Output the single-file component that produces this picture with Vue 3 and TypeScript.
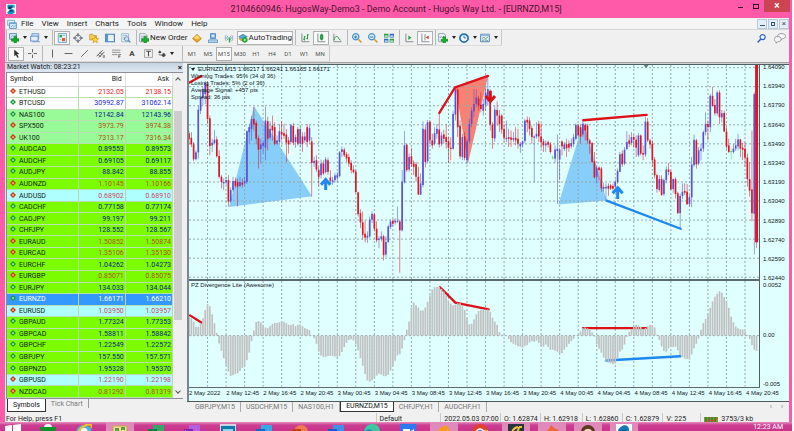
<script setup lang="ts">
import { h, ref } from 'vue'
import type { FunctionalComponent } from 'vue'

/* ---------- icons: [path, fill, stroke, stroke width] on a 16 x 16 grid ---------- */
type Shape = [string, string, string?, number?]

const icons: Record<string, Shape[]> = {
  app: [
    ['M0 0h16v16H0z', '#f4fbff'],
    ['M3 1h10l1 3-6 4 5 1 1 5-4 2H3l-1-3 5-4-4-1-1-4z', '#1c8fc4'],
    ['M4 4h7L7 8H4zM6 10h5v2H5z', '#0b3350'],
    ['M12 1l2 2v3h-3z', '#30b6e8'],
  ],
  charts: [
    ['M1 2h11v8H1z', '#e8f3fc', '#6fa3d4', 1.4],
    ['M4 6h11v9H4z', '#d8eafa', '#4f8cc8', 1.4],
    ['M4 6h11v2H4z', '#6fa8dc'],
    ['M6 13l3-3 2 2 3-2', 'none', '#4f8cc8', 1],
  ],
  newChart: [
    ['M1 1h11v9H1z', '#d8eaf8', '#4c86b8', 1.4],
    ['M3 7l3-3 2 2 3-3', 'none', '#4c86b8', 1],
    ['M8 5h4v4h4v4h-4v3H8v-3H4V9h4z', '#14a82a', '#0b7d1c', 0.8],
  ],
  profiles: [
    ['M3 1h11v8H3z', '#cfe2f4', '#5a90c4', 1.2],
    ['M1 5h12v8H1z', '#e4effa', '#4f86bd', 1.4],
    ['M4 14h12', 'none', '#77a4cf', 1.6],
  ],
  watch: [
    ['M2 1h13v14H2z', '#eef6fd', '#5f94c4', 1.4],
    ['M4 3h4v4H4z', '#27a83b'],
    ['M8 8h5v5H8z', '#e05a26'],
    ['M9 4h4M4 10h3', 'none', '#7fa9cf', 1.2],
  ],
  cross: [
    ['M8 3a5 5 0 1 0 .01 0z', 'none', '#55606c', 1.6],
    ['M8 0v6M8 10v6M0 8h6M10 8h6', 'none', '#55606c', 1.6],
  ],
  navigator: [
    ['M1 2h5l1 2h5v7H1z', '#f3cf5c', '#b88b1c', 1],
    ['M10 5l1.500 3.500 4 .5-3 2.500.8 4-3.300-2-3.300 2 .8-4-3-2.500 4-.5z', '#ffd836', '#c58d10', 1],
  ],
  terminal: [
    ['M1 2h14v12H1z', '#f4f9fd', '#3f79b8', 1.8],
    ['M1 2h4v12H1z', '#5a96d2'],
    ['M7 5h6M7 8h6', 'none', '#c6d8ea', 1],
  ],
  tester: [
    ['M1 1h11v13H1z', '#e8f1f9', '#8aacc9', 1.2],
    ['M3 4h7M3 7h3M3 10h3', 'none', '#8aacc9', 1.2],
    ['M9 6a3.500 3.500 0 1 0 .01 0z', '#cfe5f7', '#5484ae', 1.4],
    ['M12 12l3 3', 'none', '#5484ae', 2],
  ],
  order: [
    ['M1 1h9l3 3v10H1z', '#f7fafc', '#7c8fa0', 1.2],
    ['M3 5h6M3 8h5', 'none', '#7c8fa0', 1.2],
    ['M8 5h4v4h4v4h-4v3H8v-3H4V9h4z', '#18b12c', '#0b7d1c', 0.8],
  ],
  gold: [
    ['M1 9l7-7 7 7-7 6z', '#e8aa24', '#a36b0c', 1],
    ['M3 8l5-5 5 5-5 2z', '#ffd867'],
  ],
  mql: [
    ['M4 1h8v8H4z', '#7db4e4', '#3c79b8', 1.2],
    ['M1 11h14l1 4H0z', '#bcd8f0', '#4a86c0', 1.2],
    ['M6 3h4v3H6z', '#e6f2fc'],
  ],
  signal: [
    ['M4 3a7 7 0 0 0 0 10M12 3a7 7 0 0 1 0 10', 'none', '#8aa6b8', 1.4],
    ['M6 5a4 4 0 0 0 0 6M10 5a4 4 0 0 1 0 6', 'none', '#5c9ac8', 1.4],
    ['M7 7h3v8H8z', '#35a84a'],
  ],
  auto: [
    ['M1 6l7-4 7 4-7 4z', '#58a8dc', '#2b74a8', 1],
    ['M2 8c0 5 9 7 10 0l-5 3z', '#e8b839', '#a5781a', 1],
    ['M11 7a4 4 0 1 0 .01 0z', '#21b038', '#0d7f20', 0.8],
    ['M10 9l3 2-3 2z', '#fff'],
  ],
  bars: [
    ['M3 1v13h12', 'none', '#6c7680', 1.3],
    ['M7 5v7M7 10h-2M7 6h2M12 2v8M12 3h2M12 9h-2', 'none', '#16943a', 1.5],
  ],
  candles: [
    ['M3 1v13h12', 'none', '#6c7680', 1.3],
    ['M9 1v11', 'none', '#16943a', 1.3],
    ['M7 3h4v7H7z', '#22b04c', '#0f7d30', 1],
  ],
  line: [
    ['M3 1v13h12', 'none', '#6c7680', 1.3],
    ['M3 11c2-7 6-7 8-2l3 3', 'none', '#16943a', 1.5],
  ],
  zoomIn: [
    ['M6 1a5 5 0 1 0 .01 0z', '#d4ecfb', '#3c8ccc', 1.8],
    ['M10 10l5 5', 'none', '#d29a2c', 2.6],
    ['M6 4v5M3.500 6.500h5', 'none', '#2478b8', 1.6],
  ],
  zoomOut: [
    ['M6 1a5 5 0 1 0 .01 0z', '#d4ecfb', '#3c8ccc', 1.8],
    ['M10 10l5 5', 'none', '#d29a2c', 2.6],
    ['M3.500 6.500h5', 'none', '#2478b8', 1.6],
  ],
  tile: [
    ['M0 1h7v6H0zM9 9h7v6H9z', '#2f9e3c'],
    ['M9 1h7v6H9zM0 9h7v6H0z', '#2d6fbe'],
    ['M1 4h5v2H1zM10 4h5v2h-5zM1 12h5v2H1zM10 12h5v2h-5z', '#dff0fb'],
  ],
  scroll: [
    ['M3 1v13h12', 'none', '#6c7680', 1.3],
    ['M7 4l5 3.500L7 11z', '#22a33d'],
  ],
  shift: [
    ['M3 1v13h12M8 2v10', 'none', '#6c7680', 1.3],
    ['M14 4L9 7l5 3z', '#c44a3c'],
  ],
  indicators: [
    ['M1 1h9l2 3v10H1z', '#eef4f8', '#7e8f9e', 1.2],
    ['M3 8c2-6 4 3 6-3', 'none', '#4d7ea8', 1.2],
    ['M8 6h4v4h4v3h-4v3H8v-3H5v-3h3z', '#18b12c', '#0b7d1c', 0.8],
  ],
  clock: [
    ['M8 1.500a6.500 6.500 0 1 0 .01 0z', '#f0f8ff', '#1f6cb8', 2.6],
    ['M8 4v4h3', 'none', '#1f6cb8', 1.4],
  ],
  template: [
    ['M1 2h14v12H1z', '#e6f1fa', '#5589b8', 1.6],
    ['M1 2h14v3H1z', '#8cb6da'],
    ['M3 9l3-2 3 2 4-3M3 12l4-1 6 1', 'none', '#4c8a5c', 1.2],
  ],
  search: [
    ['M10 1a4.500 4.500 0 1 0 .01 0z', '#eef4ff', '#2d5bc8', 2],
    ['M6.500 9.500L1 15', 'none', '#2d5bc8', 2.6],
  ],
  chat: [
    ['M10 2c-7 0-6 7-2 7l1 2 2-2c6 0 6-7-1-7z', '#f5f5f5', '#8d9299', 1.2],
    ['M5 6c-6 0-6 6-2 7v2l2-2c6 0 6-7 0-7z', '#f5f5f5', '#8d9299', 1.2],
  ],
  pointer: [['M4 1l9 8-4 .5 3 5-2.500 1L7 10.500 4 13z', '#333']],
  plus: [['M8 0v6M8 10v6M0 8h6M10 8h6', 'none', '#555', 1.6]],
  vline: [['M8 1v14', 'none', '#555', 1.6]],
  hline: [['M1 8h14', 'none', '#555', 1.6]],
  trend: [['M2 14L14 2', 'none', '#555', 1.5]],
  channel: [
    ['M1 13L12 2M5 15L15 5M4 10l4 4M7 6l4 4', 'none', '#444', 1.5],
    ['M12 12h4M12 14h4M12 16h4', 'none', '#444', 1.1],
  ],
  fibo: [
    ['M0 2h15M0 6h15M0 10h10', 'none', '#777', 1.3],
    ['M12 10v6M12 10h4M12 13h3', 'none', '#444', 1.2],
  ],
  label: [['M1 1h14v14H1z', 'none', '#888', 1.2], ['M4 4h8M8 4v9', 'none', '#444', 1.8]],
  arrows: [
    ['M2 6l3-4 3 4-3 2z', '#444'],
    ['M8 11l4-4 3 4-3 3zM3 10l5 1', '#444', '#444', 1.2],
  ],
  up: [['M8 0l8 8-8 8-8-8z', '#1c9a3e'], ['M8 5l3 3-3 3-3-3z', '#c8f7d0']],
  down: [['M8 0l8 8-8 8-8-8z', '#cc3c14'], ['M8 5l3 3-3 3-3-3z', '#ffc9b0']],
  /* task bar */
  windows: [['M0 2l7-1v7H0zM8 1l8-1v8H8zM0 9h7v7l-7-1zM8 9h8v7l-8-1z', '#fff']],
  store: [['M0 3h16v13H0z', '#12902a'], ['M4 3c0-4 8-4 8 0M4 8h3v6H4zM8 7h4v7H8z', '#fff']],
  ie: [['M8 1a8 8 0 1 0 .01 0z', '#45b6ea'], ['M4 9c0-7 8-7 8 0z', '#fff'], ['M0 14C2 5 9-1 15 1c1 1 0 3 0 3', 'none', '#f2c21b', 2]],
  folder: [['M1 2h14v14H1z', '#f4dc8c', '#c7a24a', 1], ['M3 4h4v4H3zM9 3h4v3H9z', '#56a04c'], ['M5 9h8v4H5z', '#e4853a']],
  excel: [['M5 1h11v15H5z', '#33a867'], ['M0 5h9v11H0z', '#107c41'], ['M2 8l5 7M7 8l-5 7', 'none', '#fff', 1.5]],
  onenote: [['M5 1h11v15H5z', '#b45fe0'], ['M0 5h9v11H0z', '#7a24b0'], ['M2 14V8l5 6V8', 'none', '#fff', 1.5]],
  screen: [['M0 1h16v15H0z', '#0f78a8', '#eaf6fb', 1.6], ['M3 6h10', 'none', '#8fd1ee', 2]],
  outlook: [['M5 1h11v15H5z', '#38a8e8'], ['M0 5h9v11H0z', '#0f6cbd'], ['M4.500 8a3 3 0 1 0 .01 0z', 'none', '#fff', 1.5]],
  ppt: [['M9 1a7 7 0 1 0 .01 0z', '#ee7a50'], ['M0 5h9v11H0z', '#c43e1c'], ['M3 14V8h3v3H3', 'none', '#fff', 1.5]],
  word: [['M5 1h11v15H5z', '#3f90e8'], ['M0 5h9v11H0z', '#1a5cbe'], ['M1 8l2 6 2-5 2 5 1-6', 'none', '#fff', 1.3]],
  edge: [['M8 0a8 8 0 1 0 .01 0z', '#1f8fd0'], ['M0 8c1-10 16-11 16 0 0 4-7 4-6 0-3-4-8-3-10 0z', '#3fc8a0']],
  zoomApp: [['M0 0h16v16H0z', '#2d79f4'], ['M3 5h7v6H3zM11 7l3-2v6l-3-2z', '#fff']],
  flame: [['M2 9C4 0 10 4 9 1c6 3 6 8 5 15H3z', '#f79a1e'], ['M6 8c3-2 4 1 6-2v8H6z', '#ffd84a']],
  chrome: [['M8 0a8 8 0 1 0 .01 0z', '#e2412e'], ['M0 8l6 4v4H3zM16 6h-6v10h4z', '#f6c224'], ['M8 5a4 4 0 1 0 .01 0z', '#4285f4', '#fff', 1.3]],
  dark: [['M0 0h16v16H0z', '#2a3340'], ['M10 3c-6 1-8 9-5 9s6-7 6-9M11 3h3', 'none', '#eec03a', 2]],
  orange: [['M0 9l5-4 2-4 3 3 6 3-5 9H3z', '#f0672e']],
  person: [['M8 1a7 7 0 1 0 .01 0z', '#5d3a22'], ['M4 7c2-3 6-3 8 0v9H4z', '#f6d5b4'], ['M1 14V8M15 14V8', 'none', '#e8f0f4', 2]],
  terminalApp: [['M0 0h16v16H0z', '#f4fbff'], ['M2 6c4-7 12-6 11 1l-7 6H1z', '#1678b4'], ['M4 7l6-1-5 5z', '#0b3350']],
}

const Icon: FunctionalComponent<{ name: string; size?: number }> = (props) =>
  h(
    'svg',
    { viewBox: '0 0 16 16', width: props.size ?? 10, height: props.size ?? 10, 'aria-hidden': 'true' },
    icons[props.name].map(([d, fill, stroke, width]) =>
      h('path', { d, fill, stroke: stroke ?? 'none', 'stroke-width': width ?? 0 }),
    ),
  )
Icon.props = ['name', 'size']

/* ---------- menus and tool bars ---------- */
const menus = ['File', 'View', 'Insert', 'Charts', 'Tools', 'Window', 'Help']

interface Tool { icon: string; title: string; text?: string; caret?: boolean; pressed?: boolean }

const mainTools: Tool[][] = [
  [{ icon: 'newChart', title: 'New Chart', caret: true }, { icon: 'profiles', title: 'Profiles', caret: true }],
  [
    { icon: 'watch', title: 'Market Watch', pressed: true },
    { icon: 'cross', title: 'Data Window' },
    { icon: 'navigator', title: 'Navigator' },
    { icon: 'terminal', title: 'Terminal' },
    { icon: 'tester', title: 'Strategy Tester' },
  ],
  [
    { icon: 'order', title: 'New Order', text: 'New Order' },
    { icon: 'gold', title: 'MetaEditor' },
    { icon: 'mql', title: 'Community' },
    { icon: 'signal', title: 'Signals' },
    { icon: 'auto', title: 'AutoTrading', text: 'AutoTrading', pressed: true },
  ],
  [
    { icon: 'bars', title: 'Bar Chart' },
    { icon: 'candles', title: 'Candlesticks', pressed: true },
    { icon: 'line', title: 'Line Chart' },
  ],
  [{ icon: 'zoomIn', title: 'Zoom In' }, { icon: 'zoomOut', title: 'Zoom Out' }, { icon: 'tile', title: 'Tile Windows' }],
  [{ icon: 'scroll', title: 'Auto Scroll' }, { icon: 'shift', title: 'Chart Shift', pressed: true }],
  [
    { icon: 'indicators', title: 'Indicators', caret: true },
    { icon: 'clock', title: 'Periods', caret: true },
    { icon: 'template', title: 'Templates', caret: true },
  ],
]

const drawTools: Tool[][] = [
  [{ icon: 'pointer', title: 'Cursor', pressed: true }, { icon: 'plus', title: 'Crosshair' }],
  [
    { icon: 'vline', title: 'Vertical Line' },
    { icon: 'hline', title: 'Horizontal Line' },
    { icon: 'trend', title: 'Trendline' },
    { icon: 'channel', title: 'Channel' },
    { icon: 'fibo', title: 'Fibonacci' },
    { icon: '', title: 'Text', text: 'A' },
    { icon: 'label', title: 'Text Label' },
    { icon: 'arrows', title: 'Arrows', caret: true },
  ],
]

const periods = ['M1', 'M5', 'M15', 'M30', 'H1', 'H4', 'D1', 'W1', 'MN']
const period = ref('M15')

/* ---------- market watch ---------- */
type Quote = [symbol: string, dir: 'up' | 'down', bid: string, ask: string, tone: string]
const quotes: Quote[] = [
  ['ETHUSD', 'down', '2132.05', '2138.15', 'plain'],
  ['BTCUSD', 'up', '30992.87', '31062.14', 'plain'],
  ['NAS100', 'up', '12142.84', '12143.96', 'index'],
  ['SPX500', 'down', '3973.79', '3974.38', 'index'],
  ['UK100', 'down', '7313.17', '7316.34', 'index'],
  ['AUDCAD', 'up', '0.89553', '0.89573', 'cross'],
  ['AUDCHF', 'up', '0.69105', '0.69117', 'cross'],
  ['AUDJPY', 'up', '88.842', '88.855', 'cross'],
  ['AUDNZD', 'down', '1.10145', '1.10166', 'cross'],
  ['AUDUSD', 'down', '0.68902', '0.68910', 'major'],
  ['CADCHF', 'up', '0.77158', '0.77174', 'cross'],
  ['CADJPY', 'up', '99.197', '99.211', 'cross'],
  ['CHFJPY', 'up', '128.552', '128.567', 'cross'],
  ['EURAUD', 'down', '1.50852', '1.50874', 'cross'],
  ['EURCAD', 'down', '1.35106', '1.35130', 'cross'],
  ['EURCHF', 'up', '1.04262', '1.04273', 'cross'],
  ['EURGBP', 'down', '0.85071', '0.85075', 'cross'],
  ['EURJPY', 'up', '134.033', '134.044', 'cross'],
  ['EURNZD', 'up', '1.66171', '1.66210', 'selected'],
  ['EURUSD', 'down', '1.03950', '1.03957', 'major'],
  ['GBPAUD', 'up', '1.77324', '1.77353', 'cross'],
  ['GBPCAD', 'up', '1.58811', '1.58842', 'cross'],
  ['GBPCHF', 'up', '1.22549', '1.22572', 'cross'],
  ['GBPJPY', 'up', '157.550', '157.571', 'cross'],
  ['GBPNZD', 'up', '1.95328', '1.95370', 'cross'],
  ['GBPUSD', 'down', '1.22190', '1.22198', 'major'],
  ['NZDCAD', 'down', '0.81292', '0.81319', 'cross'],
]

/* ---------- price chart ----------
   One candle per entry: direction, high, body top, body bottom, low (plot units). */
const STEP = 6.95
const candleData = `
r212 218 236 250,r215 232 252 260,r245 252 297 302,b270 276 297 300,b135 147 276 295,b90 110 150 160,b78 85 112 135,b60 66 100 130,
r62 68 175 190,r165 173 257 285,b235 247 255 275,b208 238 248 250,r228 237 288 292,r270 287 350 355,r345 350 366 385,b355 366 370 390,
b350 360 366 375,r345 360 425 440,b382 390 424 428,b350 363 390 395,r352 362 377 383,r355 366 380 440,b350 366 378 382,r355 368 374 382,
b350 363 370 378,b210 212 366 372,b190 200 215 250,b165 175 205 240,r138 175 192 210,r180 187 235 252,r225 233 268 325,b235 252 266 310,
b240 248 256 280,b138 180 262 300,r168 182 235 270,b182 205 232 240,r165 195 210 240,r185 200 250 255,b225 240 250 255,b190 212 245 255,
r182 214 222 240,r190 218 226 235,r205 222 247 305,r230 240 252 280,b190 194 245 250,r188 196 247 255,b222 230 245 262,r200 206 250 255,
b198 206 250 262,r215 228 250 275,b215 228 240 248,r190 200 245 260,b195 203 240 250,r230 243 308 410,b290 302 308 320,r285 300 328 335,
r320 330 350 378,b298 310 345 355,r300 310 340 345,b290 297 336 340,r292 300 335 345,r330 352 362 372,b350 360 366 374,b338 346 360 368,
b335 345 352 365,b272 276 348 352,b258 267 275 290,r262 268 285 290,r275 282 295 305,r280 290 310 320,r300 308 330 340,r315 328 336 340,
r330 334 396 400,r395 397 463 470,r448 460 488 505,r455 488 525 540,r483 522 534 548,b515 528 534 550,b470 480 530 535,b455 462 480 490,
r460 464 507 515,r485 507 542 548,b530 537 541 565,b515 530 538 545,r525 530 587 603,b530 547 585 592,b495 500 547 550,b480 485 502 508,
r478 483 492 500,b475 483 488 495,b440 483 486 490,r480 485 512 640,b330 365 512 515,b212 255 367 370,r250 253 330 335,b280 290 328 335,
r262 288 312 320,r300 310 320 345,r305 312 350 365,r320 350 404 405,b340 370 404 405,b182 205 375 382,r195 207 305 322,b178 185 303 310,
r178 184 240 250,r220 240 255 265,b200 218 250 255,b190 205 220 235,r155 207 252 262,b215 225 250 258,r208 222 235 250,r190 230 245 265,
r228 242 262 308,r230 262 266 300,b150 160 265 268,b80 85 162 180,r82 87 200 230,r180 195 288 295,b220 230 290 300,r215 228 293 300,
b235 243 300 312,b175 190 243 250,b140 150 190 200,b85 130 152 170,b85 110 130 140,r105 113 135 150,r95 132 145 155,b115 130 150 165,
b80 95 132 150,b45 85 118 135,r85 97 192 210,r185 192 233 265,b135 147 234 245,r122 148 165 195,r148 165 190 215,r160 165 207 220,
r190 205 232 245,b180 232 236 245,r205 230 235 260,r210 231 238 260,b215 233 238 245,r200 232 240 255,r205 235 250 265,b245 250 258 278,
b240 243 252 262,b175 180 242 248,r168 178 186 215,r170 180 205 225,r195 203 230 250,b225 228 232 367,b185 220 228 235,r180 190 228 245,
r188 228 245 265,r235 243 255 275,b240 250 255 275,r240 245 253 262,r245 252 275 280,g285 290 294 298,b255 268 295 308,b222 265 272 432,
b262 268 298 360,r240 243 258 285,b245 252 266 272,r235 252 264 290,r240 250 262 275,b235 248 258 265,b220 230 250 260,b188 193 235 240,
r190 195 225 230,r190 200 228 250,b178 190 222 230,r188 193 210 240,r190 195 240 250,r235 240 250 280,r245 248 305 308,r275 303 352 355,
b318 322 350 370,r318 322 330 360,r320 325 385 395,b368 381 386 395,b370 380 385 420,r370 378 386 408,r372 376 386 390,r370 378 386 392,
b358 366 380 385,b325 332 366 372,b275 282 335 335,r270 280 312 320,b260 268 310 315,b212 245 266 270,r222 240 250 260,b215 230 248 255,
r222 230 238 262,r225 238 262 290,b218 225 285 290,r222 225 280 285,r255 278 283 300,b168 183 283 290,r172 183 240 245,r235 240 252 265,
r240 250 300 320,r290 298 345 355,r340 345 387 398,b345 357 390 395,r345 357 405 408,b355 360 402 408,b318 328 360 370,r308 328 335 345,
r330 335 388 390,b355 357 387 398,r352 357 402 415,r395 400 460 462,b400 408 460 508,b370 395 408 418,r370 393 398 405,r372 395 433 435,
b405 412 433 440,b290 313 412 442,b222 238 315 320,r235 240 312 325,b260 270 310 315,b250 265 272 300,b210 215 265 275,b155 190 215 225,
r180 190 200 240,b100 105 200 215,r78 105 136 138,r115 133 158 165,b90 95 158 165,r88 95 170 190,b148 158 170 185,r150 157 213 215,
r200 213 258 265,r235 255 275 278,g265 272 276 298,b250 265 275 280,b235 255 265 272,b220 237 258 270,r235 237 265 290,r248 262 268 300,
r245 265 292 320,r280 292 357 380,r305 357 392 410,r210 388 460 485,b95 100 462 585,r12 12 548 565`

const candleColors: Record<string, string> = { r: '#e01423', b: '#5a50d4', g: '#5fd86a' }
const candles = candleData
  .trim()
  .split(/,\s*/)
  .map((entry, i, all) => {
    const [high, top, bottom, low] = entry.slice(1).split(' ').map(Number)
    /* the newest candle is drawn bold */
    const width = i === all.length - 1 ? 9 : 5
    return { x: i * STEP, high, top, bottom, low, width, color: candleColors[entry[0]] }
  })

const gridX = Array.from({ length: 30 }, (_, i) => (i + 1) * STEP * 8)
const gridY = Array.from({ length: 12 }, (_, i) => 20 + i * 57.6)

/* ---------- oscillator, one end value per bar around the zero line ---------- */
const ZERO = 183
const oscillator = [
  125, 130, 140, 156, 156, 145, 130, 105, 86, 93, 118, 145, 175, 207, 230, 252, 273, 293, 306, 304, 300, 298, 291, 282, 275, 258,
  235, 200, 167, 141, 138, 142, 150, 158, 160, 154, 147, 144, 144, 142, 140, 141, 145, 150, 150, 148, 154, 150, 149, 154, 160, 163,
  166, 184, 191, 208, 232, 244, 248, 248, 245, 245, 246, 247, 248, 245, 233, 218, 205, 196, 194, 198, 210, 228, 252, 275, 300, 320,
  324, 320, 312, 305, 300, 302, 306, 307, 303, 290, 275, 260, 243, 240, 222, 197, 165, 140, 97, 82, 90, 97, 106, 106, 97, 80, 60,
  42, 35, 34, 34, 40, 48, 60, 75, 85, 90, 88, 84, 84, 90, 105, 130, 148, 147, 133, 118, 108, 104, 103, 103, 103, 110, 128, 140,
  150, 172, 180, 181, 184, 194, 203, 208, 211, 215, 217, 220, 214, 212, 204, 200, 202, 198, 205, 213, 217, 210, 217, 226, 226, 229,
  232, 238, 236, 226, 218, 208, 200, 193, 184, 182, 170, 160, 158, 160, 165, 173, 186, 210, 223, 235, 250, 260, 265, 268, 270, 268,
  252, 232, 226, 210, 187, 172, 163, 155, 150, 152, 156, 163, 160, 154, 150, 152, 158, 180, 196, 216, 230, 232, 222, 216, 218, 217,
  228, 242, 248, 253, 254, 256, 240, 222, 208, 192, 165, 145, 132, 118, 98, 78, 64, 55, 47, 52, 65, 76, 98, 125, 142, 155, 161,
  163, 164, 170, 180, 193, 212, 226, 230,
]

const prices = ['1.64090', '1.63940', '1.63790', '1.63640', '1.63490', '1.63340', '1.63190', '1.63040', '1.62890', '1.62740', '1.62590', '1.62440']
const levels = ['0.0052', '0.00', '-0.005']
const times = [
  '2 May 2022', '2 May 12:45', '2 May 16:45', '2 May 20:45', '3 May 00:45', '3 May 04:45', '3 May 08:45', '3 May 12:45',
  '3 May 16:45', '3 May 20:45', '4 May 00:45', '4 May 04:45', '4 May 08:45', '4 May 12:45', '4 May 16:45', '4 May 20:45',
]
const summary = ['Winning Trades: 95% (34 of 36)', 'Losing Trades: 5% (2 of 36)', 'Average Signal: +457 pts', 'Spread: 36 pts']

const chartTabs = ['GBPJPY,M15', 'USDCHF,M15', 'NAS100,H1', 'EURNZD,M15', 'CHFJPY,H1', 'AUDCHF,H1']
const chartTab = ref('EURNZD,M15')
const watchTab = ref('Symbols')
const ohlc = ['2022.05.03 07:00', 'O: 1.62874', 'H: 1.62918', 'L: 1.62860', 'C: 1.62879', 'V: 225']

const tasks = [
  'windows', 'store', 'ie', 'folder', 'excel', 'onenote', 'screen', 'outlook', 'ppt', 'word', 'edge', 'zoomApp', 'flame',
  'chrome', 'dark', 'orange', 'person', 'terminalApp',
]
const openTasks = ['folder', 'flame', 'orange', 'terminalApp', 'dark', 'person']
</script>

<template>
  <div class="desktop">
    <div class="window">
      <header class="titlebar">
        <Icon name="app" />
        <h1>2104660946: HugosWay-Demo3 - Demo Account - Hugo's Way Ltd. - [EURNZD,M15]</h1>
        <div class="controls">
          <button type="button" aria-label="Minimize"><i class="min"></i></button>
          <button type="button" aria-label="Maximize"><i class="max"></i></button>
          <button type="button" class="close" aria-label="Close">×</button>
        </div>
      </header>

      <div class="body">
        <nav class="menubar">
          <Icon name="charts" />
          <button v-for="m in menus" :key="m" type="button">{{ m }}</button>
          <div class="mdi">
            <button type="button" aria-label="Minimize chart"><i class="min"></i></button>
            <button type="button" aria-label="Restore chart"><i class="max"></i></button>
            <button type="button" aria-label="Close chart">×</button>
          </div>
        </nav>

        <div class="toolrow">
          <div class="toolbar">
            <div v-for="(group, g) in mainTools" :key="g" class="group">
              <button
                v-for="t in group"
                :key="t.title"
                type="button"
                :aria-label="t.title"
                :class="{ pressed: t.pressed }"
              >
                <Icon :name="t.icon" /><span v-if="t.text">{{ t.text }}</span><i v-if="t.caret" class="caret"></i>
              </button>
            </div>
          </div>
          <div class="extras">
            <button type="button" aria-label="Search"><Icon name="search" :size="9" /></button>
            <button type="button" aria-label="Chat"><Icon name="chat" :size="12" /></button>
          </div>
        </div>

        <div class="toolrow">
          <div class="toolbar">
            <div v-for="(group, g) in drawTools" :key="g" class="group">
              <button v-for="t in group" :key="t.title" type="button" :aria-label="t.title" :class="{ pressed: t.pressed }">
                <Icon v-if="t.icon" :name="t.icon" :size="9" /><b v-else>{{ t.text }}</b><i v-if="t.caret" class="caret"></i>
              </button>
            </div>
            <div class="group periods">
              <button v-for="p in periods" :key="p" type="button" :class="{ pressed: p === period }" @click="period = p">
                {{ p }}
              </button>
            </div>
          </div>
        </div>

        <main class="workspace">
          <section class="watch">
            <header>
              <h2>Market Watch: 08:23:21</h2>
              <button type="button" aria-label="Close market watch">×</button>
            </header>
            <div class="list">
              <table>
                <thead>
                  <tr><th>Symbol</th><th>Bid</th><th>Ask</th></tr>
                </thead>
                <tbody>
                  <tr v-for="[symbol, dir, bid, ask, tone] in quotes" :key="symbol" :class="[tone, dir]">
                    <td><Icon :name="dir" :size="6" />{{ symbol }}</td>
                    <td>{{ bid }}</td>
                    <td>{{ ask }}</td>
                  </tr>
                </tbody>
              </table>
              <div class="scrollbar">
                <i class="chev up"></i>
                <div class="track"><div class="thumb"></div></div>
                <i class="chev down"></i>
              </div>
            </div>
            <div class="watchtabs">
              <button
                v-for="t in ['Symbols', 'Tick Chart']"
                :key="t"
                type="button"
                :class="{ active: t === watchTab }"
                @click="watchTab = t"
              >
                {{ t }}
              </button>
            </div>
          </section>

          <section class="charts">
            <div class="chart">
              <div class="pane price">
                <svg class="plot" viewBox="0 12 1710 648" preserveAspectRatio="none" aria-label="EURNZD price chart">
                  <polygon points="120,441 195,137 369,409" fill="#87cefa" />
                  <polygon points="800,80 897,45 837,310" fill="#fa8072" />
                  <polygon points="1108,434 1183,185 1253,422" fill="#87cefa" />
                  <g class="grid">
                    <line v-for="x in gridX" :key="'x' + x" :x1="x" :x2="x" y1="12" y2="660" />
                    <line v-for="y in gridY" :key="'y' + y" x1="0" x2="1710" :y1="y" :y2="y" />
                  </g>
                  <g v-for="c in candles" :key="c.x" :fill="c.color">
                    <rect :x="c.x - 1" :y="c.high" width="2" :height="c.low - c.high" opacity="0.8" />
                    <rect :x="c.x - c.width / 2" :y="c.top" :width="c.width" :height="c.bottom - c.top" />
                  </g>
                  <g class="signal sell">
                    <polyline points="0,66 37,45" />
                    <polyline points="751,157 798,80 897,45" />
                    <polyline points="1183,179 1373,163" />
                    <path d="M904 90v30M890 106l14 16 14-16" class="arrow" />
                  </g>
                  <g class="signal buy">
                    <polyline points="1253,422 1475,507" />
                    <path d="M410 390v-32M396 374l14-16 14 16" class="arrow" />
                    <path d="M1286 417v-34M1271 400l15-17 15 17" class="arrow" />
                  </g>
                  <polygon points="1364,12 1379,12 1371,21" fill="#66787a" />
                </svg>
                <div class="overlay">
                  <p><i class="caret"></i>EURNZD,M15  1.66217 1.66241 1.66165 1.66171</p>
                  <p v-for="s in summary" :key="s">{{ s }}</p>
                </div>
                <div class="axis"><span v-for="p in prices" :key="p">{{ p }}</span></div>
              </div>

              <div class="pane osc">
                <svg class="plot" viewBox="0 16 1710 323" preserveAspectRatio="none" aria-label="Divergence oscillator">
                  <g class="grid">
                    <line v-for="x in gridX" :key="x" :x1="x" :x2="x" y1="16" y2="339" />
                    <line x1="0" x2="1710" :y1="ZERO" :y2="ZERO" />
                  </g>
                  <g class="signal sell">
                    <polyline points="3,121 37,143" />
                    <polyline points="753,35 799,82 899,103" />
                    <polyline points="1182,160 1371,160" />
                  </g>
                  <g class="signal buy"><polyline points="1251,259 1474,246" /></g>
                  <g fill="#c0c0c0">
                    <rect
                      v-for="(v, i) in oscillator"
                      :key="i"
                      :x="i * STEP - 2.5"
                      :y="Math.min(v, ZERO)"
                      width="5"
                      :height="Math.abs(v - ZERO)"
                    />
                  </g>
                </svg>
                <div class="overlay"><p>PZ Divergence Lite (Awesome)</p></div>
                <div class="axis"><span v-for="l in levels" :key="l">{{ l }}</span></div>
              </div>

              <div class="timeline"><span v-for="t in times" :key="t">{{ t }}</span></div>
            </div>

            <div class="charttabs">
              <button
                v-for="t in chartTabs"
                :key="t"
                type="button"
                :class="{ active: t === chartTab }"
                @click="chartTab = t"
              >
                {{ t }}
              </button>
              <div class="pager">
                <button type="button" aria-label="Previous tabs">‹</button>
                <button type="button" aria-label="Next tabs">›</button>
              </div>
            </div>
          </section>
        </main>

        <footer class="status">
          <span class="help">For Help, press F1</span>
          <span class="profile">Default</span>
          <span v-for="o in ohlc" :key="o">{{ o }}</span>
          <span class="traffic">
            <svg viewBox="0 0 14 9" width="14" height="9" aria-hidden="true">
              <path d="M0 1h14v8H0z" fill="#6fa03c" />
              <path d="M2 1v8M5 1v8M8 1v8M11 1v8" stroke="#35611a" stroke-width="1" />
              <path d="M0 7l6-3 3 1 5-3" stroke="#d24a2a" fill="none" />
            </svg>
            3753/3 kb
          </span>
        </footer>
      </div>
    </div>

    <div class="taskbar">
      <button v-for="t in tasks" :key="t" type="button" :aria-label="t" :class="{ open: openTasks.includes(t) }">
        <Icon :name="t" :size="16" />
      </button>
      <time>12:23 AM</time>
    </div>
  </div>
</template>

<style>
body {
  margin: 0;
  overflow: hidden;
}
</style>

<style scoped>
* {
  box-sizing: border-box;
}
.desktop {
  display: flex;
  flex-direction: column;
  height: 100vh;
  padding-right: 2px;
  background: #fff;
  color: #1b1b1b;
  font: 8px/10px Roboto, 'Noto Sans', sans-serif;
}
button {
  margin: 0;
  padding: 0;
  border: 0;
  background: none;
  color: inherit;
  font: inherit;
  white-space: nowrap;
}
h1,
h2,
p {
  margin: 0;
  font-weight: 400;
}
svg {
  display: block;
  flex: none;
}
.window {
  flex: 1;
  min-height: 0;
  display: flex;
  flex-direction: column;
  background: #ff5aa9;
}

/* title bar */
.titlebar {
  display: flex;
  align-items: center;
  height: 18px;
  padding-left: 6px;
}
.titlebar h1 {
  flex: 1;
  padding-left: 44px;
  color: #4a1430;
  font-size: 9px;
  text-align: center;
  white-space: nowrap;
}
.controls {
  display: flex;
  align-self: flex-start;
  height: 12px;
  padding-right: 2px;
}
.controls button {
  display: flex;
  align-items: center;
  justify-content: center;
  width: 16px;
}
.controls .close {
  width: 26px;
  background: #cc4452;
  color: #fff;
  font-size: 10px;
  font-weight: 700;
}
.min {
  width: 5px;
  height: 4px;
  border-bottom: 1px solid #3a1024;
}
.max {
  width: 6px;
  height: 5px;
  border: 1px solid #3a1024;
}

.body {
  flex: 1;
  min-height: 0;
  display: flex;
  flex-direction: column;
  margin: 0 3px 0 5px;
  background: #f0f0f0;
}

/* menu */
.menubar {
  display: flex;
  align-items: center;
  height: 12px;
  padding-left: 2px;
  border-bottom: 1px solid #d4d6d8;
  background: #f5f5f5;
}
.menubar > button {
  padding-left: 4px;
  margin-right: 4px;
}
.mdi {
  display: flex;
  gap: 1px;
  margin-left: auto;
}
.mdi button {
  display: flex;
  align-items: center;
  justify-content: center;
  width: 10px;
  height: 10px;
  border: 1px solid #b4c8d8;
  background: #e4eef6;
  color: #3c5468;
}
.mdi .min,
.mdi .max {
  border-color: #3c5468;
}
.mdi .max {
  width: 4px;
  height: 4px;
}

/* tool bars */
.toolrow {
  display: flex;
  justify-content: space-between;
  height: 16px;
}
.toolbar {
  display: flex;
  border-right: 1px solid #c8c8c8;
  border-bottom: 1px solid #dcdcdc;
}
.group {
  display: flex;
  align-items: center;
  padding: 0 1px;
  border-left: 1px solid #b8b8b8;
  margin-left: 1px;
}
.group button {
  display: flex;
  align-items: center;
  justify-content: center;
  gap: 1px;
  min-width: 16px;
  height: 14px;
  border: 1px solid transparent;
}
.group .pressed {
  border-color: #b0b0b0;
  background: #fafafa;
}
.group b {
  color: #444;
}
.caret {
  width: 0;
  height: 0;
  margin: 0 1px 0 3px;
  border: 2px solid transparent;
  border-top: 3px solid #222;
  border-bottom: 0;
}
.periods {
  margin-left: 5px;
  color: #555;
  font-size: 6px;
}
.extras {
  display: flex;
  align-items: center;
  gap: 8px;
  padding-right: 3px;
}

/* workspace */
.workspace {
  flex: 1;
  min-height: 0;
  display: flex;
  gap: 4px;
  padding-bottom: 1px;
  border-top: 1px solid #a0a0a0;
}
.watch {
  display: flex;
  flex-direction: column;
  width: 178px;
  padding-left: 1px;
}
.watch > header {
  display: flex;
  align-items: center;
  justify-content: space-between;
  height: 9px;
  padding: 0 1px;
  background: linear-gradient(#c4d2e2, #dfe8f2);
}
.watch h2 {
  font-size: 7px;
  line-height: 9px;
}
.watch > header button {
  font-weight: 700;
  line-height: 8px;
}
.list {
  flex: 1;
  min-height: 0;
  display: flex;
  border: 1px solid #8c9096;
  border-right: 0;
}
table {
  flex: 1;
  height: 100%;
  border-collapse: collapse;
  table-layout: fixed;
  line-height: 8px;
  background: #fff;
}
th {
  height: 13px;
  padding: 0 3px;
  border-right: 1px solid #e2e2e2;
  border-bottom: 1px solid #d0d0d0;
  font-size: 7px;
  font-weight: 400;
  text-align: right;
}
th:first-child {
  width: 71px;
  text-align: left;
}
td {
  padding: 0 1px;
  border-right: 1px solid #b9d8b0;
  border-bottom: 1px solid #b9e0b0;
  font-size: 7px;
  text-align: right;
}
td:first-child {
  text-align: left;
}
td svg {
  display: inline-block;
  margin: 0 3px 0 2px;
}
.up td {
  color: #0a1a8c;
}
.down td {
  color: #b0500c;
}
tr td:first-child {
  color: #12240c;
}
.plain td {
  background: #fff;
}
.plain.up td + td {
  color: #2222f0;
}
.plain.down td + td {
  color: #f02020;
}
.index td {
  background: #98fb98;
}
.cross td {
  background: #7cfc00;
}
.major td {
  background: #afffff;
}
.major td + td {
  color: #cc4a5c;
}
.selected td,
.selected td:first-child {
  background: #3399ff;
  color: #fff;
}
.scrollbar {
  display: flex;
  flex-direction: column;
  align-items: center;
  justify-content: space-between;
  width: 10px;
  padding: 5px 1px;
  background: #f0f0f0;
}
.track {
  flex: 1;
  align-self: stretch;
  display: grid;
  grid-template-rows: 29fr 206fr 68fr;
}
.thumb {
  grid-row: 2;
  background: #cdcdcd;
}
.chev {
  width: 4px;
  height: 4px;
  border: 1px solid #555;
  border-width: 1px 0 0 1px;
}
.chev.up {
  transform: rotate(45deg);
}
.chev.down {
  transform: rotate(225deg);
}
.watchtabs {
  display: flex;
  height: 13px;
  padding-left: 1px;
}
.watchtabs button {
  padding: 0 5px;
  color: #777;
  font-size: 7px;
}
.watchtabs button + button {
  border-right: 1px solid #999;
  height: 9px;
}
.watchtabs .active {
  border: 1px solid #333;
  border-top: 0;
  background: #fff;
  color: #111;
}

/* charts */
.charts {
  flex: 1;
  min-width: 0;
  display: flex;
  flex-direction: column;
  border-top: 1px solid #d0d0d0;
}
.chart {
  flex: 1;
  min-height: 0;
  display: flex;
  flex-direction: column;
  border-top: 1px solid #4e6064;
  border-left: 2px solid #78888c;
  background: #e0ffff;
  color: #10181c;
  font: 6px/7px 'Liberation Sans', sans-serif;
}
.pane {
  position: relative;
  min-height: 0;
  display: grid;
  grid-template-columns: minmax(0, 1fr) 29px;
}
.price {
  flex: 217;
}
.osc {
  flex: 107;
}
.plot {
  width: 100%;
  height: 100%;
  min-height: 0;
  border-right: 1px solid #4e6064;
  border-bottom: 2px solid #5a6a6e;
}
.osc .plot {
  border-bottom-width: 1px;
}
.grid line {
  stroke: #93a9ae;
  stroke-width: 1;
  stroke-dasharray: 2 2;
  vector-effect: non-scaling-stroke;
}
.signal {
  fill: none;
  stroke-width: 7;
  stroke-linecap: round;
}
.sell {
  stroke: #e01018;
}
.buy {
  stroke: #1e88f0;
}
.arrow {
  stroke-width: 9;
  stroke-linecap: butt;
}
.overlay {
  position: absolute;
  top: 1px;
  left: 2px;
}
.overlay p {
  display: flex;
  align-items: center;
  white-space: pre;
}
.overlay .caret {
  margin: 0 3px 0 0;
}
.axis {
  display: flex;
  flex-direction: column;
  justify-content: space-between;
  min-height: 0;
  padding-left: 3px;
}
.price .axis {
  margin: -1px 0;
}
.osc .axis {
  padding: 1px 0 0 3px;
}
.timeline {
  display: grid;
  grid-template-columns: repeat(15, minmax(0, 37fr)) minmax(0, 14fr);
  height: 13px;
  margin-right: 29px;
  white-space: nowrap;
  line-height: 11px;
}
.charttabs {
  display: flex;
  height: 11px;
  padding-left: 3px;
  border-top: 1px solid #555;
  color: #777;
  font-size: 7px;
  line-height: 9px;
}
.charttabs > button {
  padding: 0 5px;
  border-right: 1px solid #aaa;
}
.charttabs .active {
  border: 1px solid #333;
  border-top: 0;
  background: #fff;
  color: #111;
}
.pager {
  display: flex;
  gap: 9px;
  margin-left: auto;
  padding-right: 6px;
}

/* status bar */
.status {
  display: grid;
  grid-template-columns: 372fr 65fr 60fr 40fr 42fr 40fr 41fr 38fr 89fr;
  height: 9px;
  overflow: hidden;
  font-size: 7px;
  line-height: 13px;
  white-space: nowrap;
}
.status span {
  padding-left: 3px;
  border-left: 1px solid #c8c8c8;
}
.status .help {
  padding-left: 1px;
  border-left: 0;
}
.status .traffic {
  display: flex;
  gap: 3px;
}
.traffic svg {
  margin-top: 3px;
}

/* task bar */
.taskbar {
  display: flex;
  align-items: flex-start;
  height: 9px;
  overflow: hidden;
  background: linear-gradient(#e590bd, #cc3f92 3px, #c8348c);
}
.taskbar button {
  display: flex;
  justify-content: center;
  width: 28px;
  height: 20px;
  margin-right: 8px;
  padding-top: 2px;
}
.taskbar button:first-child {
  width: 26px;
}
.taskbar .open {
  background: #e08abc;
}
.taskbar time {
  margin-left: auto;
  padding: 2px 9px 0 0;
  color: #fff;
  font-size: 7px;
  line-height: 7px;
}
</style>
